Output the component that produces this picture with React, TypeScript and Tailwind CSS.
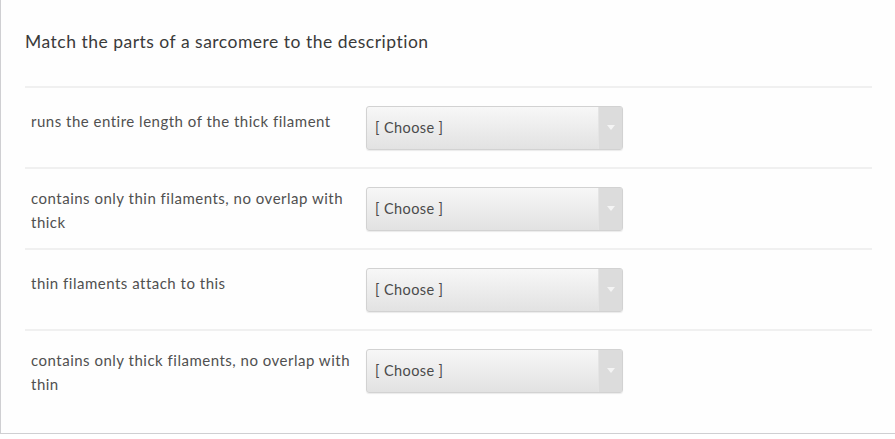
import React from "react";

const rows = [
  { t: "runs the entire length of the thick filament", two: false },
  { t: "contains only thin filaments, no overlap with thick", two: true },
  { t: "thin filaments attach to this", two: false },
  { t: "contains only thick filaments, no overlap with thin", two: true },
];

function Select() {
  return (
    <div className="mt-[18px] flex h-[44px] w-[257px] shrink-0 items-stretch rounded-[3px] border border-[#d2d2d2] bg-gradient-to-b from-[#f7f7f7] to-[#e2e2e2] shadow-[0_1px_1px_rgba(0,0,0,0.08)]">
      <div className="flex flex-1 items-center pl-[8px] text-[14.5px] tracking-[0.4px] text-[#4a4a4a]">[ Choose ]</div>
      <div className="flex w-[24px] items-center justify-center border-l border-[#e4e4e4] bg-[#dcdcdc]">
        <svg width="8" height="6" viewBox="0 0 8 6">
          <path d="M0 0 H8 L4 5 Z" fill="#f4f4f4" />
        </svg>
      </div>
    </div>
  );
}

export default function App() {
  return (
    <div
      className="h-[439px] w-[895px] overflow-hidden bg-white"
      style={{ fontFamily: "Lato, 'Open Sans', sans-serif" }}
    >
      <div className="h-[434px] border-b border-l border-[#cfcfd2] bg-[#fefefe]">
        <div className="pl-[24px] pr-[23px]">
          <div className="flex h-[86px] items-center pb-[1px] text-[17.5px] tracking-[0.5px] text-[#3a3a3a]">
            Match the parts of a sarcomere to the description
          </div>
          {rows.map((r, i) => (
            <div
              key={i}
              className="flex h-[81px] gap-[9px] border-t-[2px] border-[#f0f0f0] pl-[6px]"
            >
              <div
                className={
                  "w-[326px] shrink-0 text-[15px] leading-[24px] tracking-[0.5px] text-[#505050] " +
                  (r.two ? "pt-[17px]" : "pt-[21px]")
                }
              >
                {r.t}
              </div>
              <Select />
            </div>
          ))}
        </div>
      </div>
    </div>
  );
}
